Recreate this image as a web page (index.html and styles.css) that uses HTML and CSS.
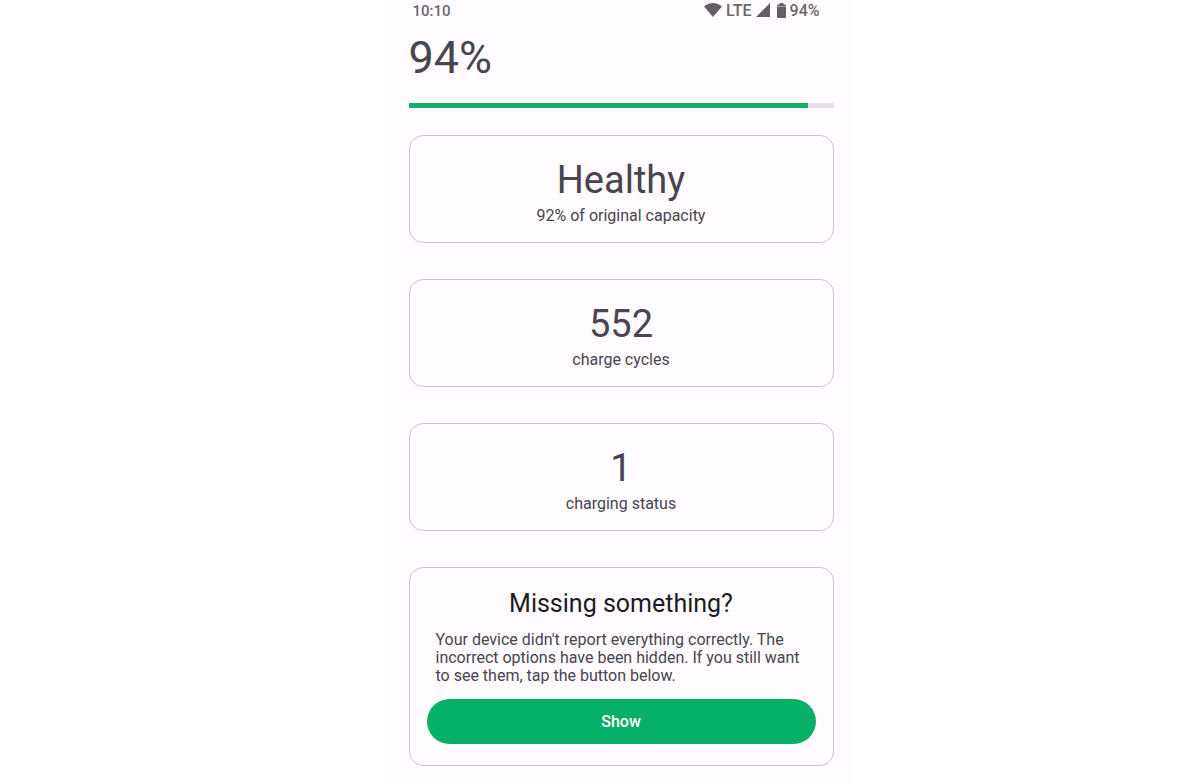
FILE: index.html
```
<!DOCTYPE html>
<html lang="en">
<head>
<meta charset="utf-8">
<meta name="viewport" content="width=device-width, initial-scale=1">
<title>Battery health</title>
<link rel="stylesheet" href="styles.css">
</head>
<body>
<div class="phone">
  <header class="status-bar">
    <span class="time">10:10</span>
    <div class="indicators">
      <svg class="wifi" viewBox="0 0 18 14" aria-hidden="true"><path d="M9 14 0 3.500Q4 0 9 0T18 3.500Z"/></svg>
      <span>LTE</span>
      <svg class="signal" viewBox="0 0 14 14" aria-hidden="true"><path d="M14 0V14H0Z"/></svg>
      <svg class="cell" viewBox="0 0 9 15" aria-hidden="true"><path d="M2.500 0H6.500V1.500H8Q9 1.500 9 2.500V3H0V2.500Q0 1.500 1 1.500H2.500ZM0 3.600H9V14Q9 15 8 15H1Q0 15 0 14Z"/></svg>
      <span>94%</span>
    </div>
  </header>
  <main class="content">
    <h1 class="level">94%</h1>
    <div class="track" role="progressbar" aria-label="Battery level" aria-valuenow="94" aria-valuemin="0" aria-valuemax="100"><div class="fill" style="width:94%"></div></div>
    <div class="cards">
      <section class="card"><h2 class="value">Healthy</h2><p class="label">92% of original capacity</p></section>
      <section class="card"><h2 class="value">552</h2><p class="label">charge cycles</p></section>
      <section class="card"><h2 class="value">1</h2><p class="label">charging status</p></section>
      <section class="card notice">
        <h2 class="notice-title">Missing something?</h2>
        <p class="notice-text">Your device didn't report everything correctly. The incorrect options have been hidden. If you still want to see them, tap the button below.</p>
        <button class="show" type="button">Show</button>
      </section>
    </div>
  </main>
</div>
</body>
</html>
```
FILE: styles.css
```
* { box-sizing: border-box; }
body { margin: 0; padding-left: 42px; background: #fff; color: #48454e; font-family: Roboto, "Liberation Sans", sans-serif; }
h1, h2, p { margin: 0; font-weight: 400; }
.phone { max-width: 461px; min-height: 100vh; margin: 0 auto; background: #fffbff; }
.status-bar { display: flex; justify-content: space-between; padding: 0 32px 0 22px; font-size: 16px; line-height: 22px; font-weight: 500; color: #6b686d; }
.time { font-size: 15px; }
.indicators { display: flex; align-items: center; gap: 4px; }
.indicators svg { fill: #636065; margin-bottom: 2px; }
.wifi { width: 18px; height: 14px; }
.signal { width: 14px; height: 14px; }
.cell { width: 9px; height: 15px; margin-left: 3px; }
.content { padding: 8px 18px 17px; }
.level { font-size: 45px; line-height: 56px; }
.track { height: 5px; margin-top: 17px; background: #e7e0ec; }
.fill { height: 100%; background: #12af69; }
.cards { display: flex; flex-direction: column; gap: 36px; margin-top: 27px; }
.card { border: 1px solid #cac4cc; border-radius: 14px; padding: 21px 17px 14px; text-align: center; }
.value { font-size: 38px; line-height: 46px; }
.label { margin-top: 1px; font-size: 16px; line-height: 24px; }
.notice { padding: 17px 17px 21px; }
.notice-title { font-size: 25px; line-height: 38px; color: #1c1b1f; }
.notice-text { margin: 8px 9px 14px; font-size: 16px; line-height: 18px; text-align: left; }
.show { display: block; width: 100%; height: 45px; border: 0; border-radius: 23px; background: #07b067; color: #fff; font: 500 16px/24px Roboto, "Liberation Sans", sans-serif; }
```
